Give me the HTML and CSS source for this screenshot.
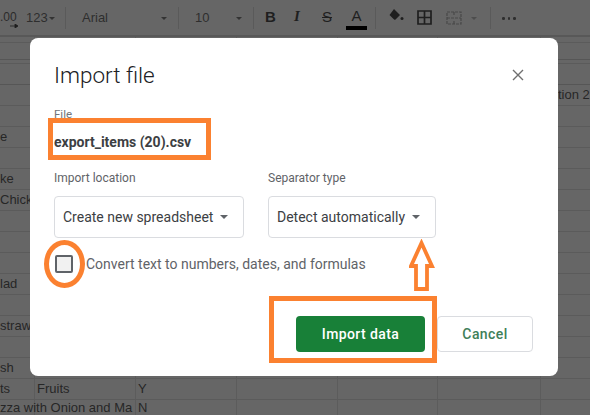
FILE: index.html
```html
<!DOCTYPE html>
<html lang="en">
<head>
<meta charset="utf-8">
<title>Import file</title>
<link rel="stylesheet" href="styles.css">
</head>
<body>
<div class="sheet">
  <div class="toolbar">
    <span class="tb-dec">.00</span>
    <svg class="tb-dec-arrow" width="8" height="4" viewBox="0 0 8 4"><path d="M0 2h5M5 0l3 2-3 2z" stroke="#1d1d1d" stroke-width="0.800" fill="#1d1d1d"/></svg>
    <span class="tb-num">123<i class="caret-s"></i></span>
    <span class="sep s1"></span>
    <span class="tb-font">Arial</span><i class="caret-s c1"></i>
    <span class="sep s2"></span>
    <span class="tb-size">10</span><i class="caret-s c2"></i>
    <span class="sep s3"></span>
    <span class="tb-b">B</span>
    <span class="tb-i">I</span>
    <span class="tb-s">S</span>
    <span class="tb-a">A</span>
    <span class="sep s4"></span>
    <svg class="ic-fill" width="16" height="16" viewBox="0 0 16 16"><path d="M6 1l6 6-4.500 4.500a1 1 0 0 1-1.400 0L1.500 7z" fill="#1f1f1f"/><circle cx="14" cy="10.500" r="1.500" fill="#1f1f1f"/></svg>
    <svg class="ic-border" width="15" height="15" viewBox="0 0 15 15"><path d="M1 1h13v13H1zM7.500 1v13M1 7.500h13" fill="none" stroke="#1f1f1f" stroke-width="1.700"/></svg>
    <svg class="ic-merge" width="16" height="14" viewBox="0 0 16 14"><path d="M1 1h14v12H1zM1 7h14M8 1v3M8 10v3" fill="none" stroke="#484848" stroke-width="1.200" stroke-dasharray="3 1"/></svg>
    <i class="caret-s c3"></i>
    <span class="sep s5"></span>
    <span class="dots"><i></i><i></i><i></i></span>
  </div>
  <div class="grid">
    <div class="cell t1">e</div>
    <div class="cell t2">ke</div>
    <div class="cell t3">Chicke</div>
    <div class="cell t4">lad</div>
    <div class="cell t5">straw</div>
    <div class="cell t6">sh</div>
    <div class="cell t7">ts</div>
    <div class="cell t8">Fruits</div>
    <div class="cell t9">Y</div>
    <div class="cell t10">zza with Onion and Ma</div>
    <div class="cell t11">N</div>
    <div class="cell t12">tion 2</div>
  </div>
</div>

<div class="dialog">
  <header class="dlg-head">
    <h1 class="dlg-title">Import file</h1>
    <svg class="dlg-close" width="12" height="12" viewBox="0 0 12 12"><path d="M1 1l10 10M11 1L1 11" stroke="#6f6f6f" stroke-width="1.400"/></svg>
  </header>
  <div class="file-label">File</div>
  <div class="file-name">export_items (20).csv</div>
  <div class="selects">
    <div class="field">
      <div class="field-label">Import location</div>
      <div class="select sel-a">Create new spreadsheet<i class="caret"></i></div>
    </div>
    <div class="field">
      <div class="field-label">Separator type</div>
      <div class="select sel-b">Detect automatically<i class="caret"></i></div>
    </div>
  </div>
  <label class="check-row"><span class="box"></span><span>Convert text to numbers, dates, and formulas</span></label>
  <div class="actions">
    <button class="btn primary">Import data</button>
    <button class="btn cancel">Cancel</button>
  </div>
</div>

<div class="mark mark-file"></div>
<div class="mark mark-check"></div>
<div class="mark mark-import"></div>
<svg class="mark-arrow" width="26" height="53" viewBox="0 0 26 53"><path d="M12.500 4L23 27H18V50H7V27H2z" fill="#fff" stroke="#fb8130" stroke-width="3.800"/></svg>
</body>
</html>
```
FILE: styles.css
```css
* { box-sizing: border-box; }
html, body { margin: 0; padding: 0; }
body {
  width: 590px; height: 415px; position: relative; overflow: hidden;
  background: #666; font-family: Roboto, "Liberation Sans", sans-serif;
}
.sheet { position: absolute; inset: 0; background: #666; }
.toolbar {
  position: relative; height: 37px; border-bottom: 2px solid #585858;
  font-family: "Liberation Sans", sans-serif; color: #2a2a2a; font-size: 13px;
}
.toolbar > * { position: absolute; }
.tb-dec { left: 0; top: 10px; color: #2b2b2b; font-size: 12px; }
.tb-dec-arrow { left: 10px; top: 24px; }
.tb-num { left: 26px; top: 10px; color: #2e2e2e; }
.caret-s { display: inline-block; border: 3.500px solid transparent; border-top: 3.500px solid #333; border-bottom: 0; }
.tb-num .caret-s { margin-left: 1px; vertical-align: 2px; }
.sep { top: 7px; width: 1px; height: 22px; background: #5a5a5a; }
.s1 { left: 65px; } .s2 { left: 178px; } .s3 { left: 253px; } .s4 { left: 375px; } .s5 { left: 490px; }
.tb-font { left: 82px; top: 10px; color: #2e2e2e; }
.c1 { left: 161px; top: 17px; } .c2 { left: 236px; top: 17px; } .c3 { left: 471px; top: 17px; border-top-color: #4d4d4d; }
.tb-size { left: 195px; top: 10px; color: #2e2e2e; }
.tb-b { left: 265px; top: 8px; font-size: 15px; font-weight: 700; color: #1f1f1f; }
.tb-i { left: 294px; top: 8px; font-size: 15px; font-style: italic; font-family: "Liberation Serif", serif; font-weight: 700; color: #1f1f1f; }
.tb-s { left: 322px; top: 8px; font-size: 15px; color: #1f1f1f; text-decoration: line-through; }
.tb-a { left: 346px; top: 7px; font-size: 15px; color: #1f1f1f; width: 21px; height: 23px; text-align: center; border-bottom: 4px solid #000; }
.ic-fill { left: 388px; top: 8px; }
.ic-border { left: 417px; top: 10px; }
.ic-merge { left: 446px; top: 11px; }
.dots { left: 502px; top: 17px; display: flex; gap: 3px; }
.dots i { width: 2.500px; height: 2.500px; background: #2e2e2e; border-radius: 50%; }
.grid {
  position: absolute; left: 0; right: 0; top: 37px; bottom: 0;
  background-color: #666;
  background-image:
    linear-gradient(to bottom, transparent 22px, #565656 22px 23px, transparent 23px 47px, #565656 47px 48px, transparent 48px),
    repeating-linear-gradient(to bottom, transparent 0 20px, #5b5b5b 20px 21px),
    linear-gradient(to right, transparent 34px, #5c5c5c 34px 35px, transparent 35px 135px, #5c5c5c 135px 136px, transparent 136px 236px, #5c5c5c 236px 237px, transparent 237px 337px, #5c5c5c 337px 338px, transparent 338px 437px, #5c5c5c 437px 438px, transparent 438px 540px, #5c5c5c 540px 541px, transparent 541px);
  background-position: 0 0, 0 6px, 0 0;
}
.cell { position: absolute; font-family: "Liberation Sans", sans-serif; font-size: 13px; color: #262626; white-space: nowrap; line-height: 14px; }
.t1 { left: 0; top: 93px; }
.t2 { left: 0; top: 135px; }
.t3 { left: 0; top: 156px; }
.t4 { left: 0; top: 240px; }
.t5 { left: 0; top: 282px; }
.t6 { left: 0; top: 324px; }
.t7 { left: 0; top: 345px; }
.t8 { left: 37px; top: 345px; }
.t9 { left: 138px; top: 345px; }
.t10 { left: 0; top: 364px; }
.t11 { left: 138px; top: 364px; }
.t12 { left: 558px; top: 51px; }

.dialog {
  position: absolute; left: 30px; top: 38px; width: 528px; height: 338px;
  background: #fff; border-radius: 8px; padding: 0 24px;
  color: #3c4043;
}
.dlg-head { display: flex; justify-content: space-between; align-items: center; height: 38px; margin-top: 18px; padding-right: 10px; }
.dlg-title { margin: 0; font-size: 22.500px; font-weight: 300; color: #202124; line-height: 38px; }
.dlg-close { margin-top: 0; }
.file-label { margin-top: 13px; font-size: 11.500px; color: #70757a; line-height: 14px; height: 14px; }
.file-name { margin-top: 11px; font-size: 14px; font-weight: 700; color: #3c4043; line-height: 20px; }
.selects { display: flex; gap: 24px; margin-top: 18px; }
.field-label { font-size: 12px; color: #5f6368; line-height: 16px; }
.select {
  margin-top: 10px; height: 42px; display: flex; align-items: center; padding: 0 0 0 8px;
  border: 1px solid #dadce0; border-radius: 4px; font-size: 14px; color: #3c4043;
}
.sel-a { width: 190px; } .sel-b { width: 168px; }
.caret { display: inline-block; margin-left: 7px; border: 4px solid transparent; border-top: 4px solid #5f6368; border-bottom: 0; }
.check-row { display: flex; align-items: center; margin-top: 14px; height: 24px; font-size: 14px; color: #5f6368; }
.box { width: 18px; height: 18px; margin-left: 1px; margin-right: 13px; border: 2px solid #5f6368; border-radius: 2px; background: #f1f1f1; }
.actions { position: absolute; left: 266px; top: 278px; display: flex; gap: 12px; }
.btn { height: 36px; border-radius: 4px; font-family: Roboto, "Liberation Sans", sans-serif; font-size: 14px; font-weight: 500; letter-spacing: 0.4px; padding: 0; }
.primary { width: 129px; background: #188038; border: 0; color: #fff; }
.cancel { width: 96px; background: #fff; border: 1px solid #dadce0; color: #3f8059; }

.mark { position: absolute; border: 5px solid #fb8130; }
.mark-file { left: 48px; top: 118px; width: 163px; height: 42px; }
.mark-check { left: 44px; top: 240px; width: 41px; height: 48px; border-radius: 50%; }
.mark-import { left: 269px; top: 296px; width: 168px; height: 67px; }
.mark-arrow { position: absolute; left: 409px; top: 239px; }
```
